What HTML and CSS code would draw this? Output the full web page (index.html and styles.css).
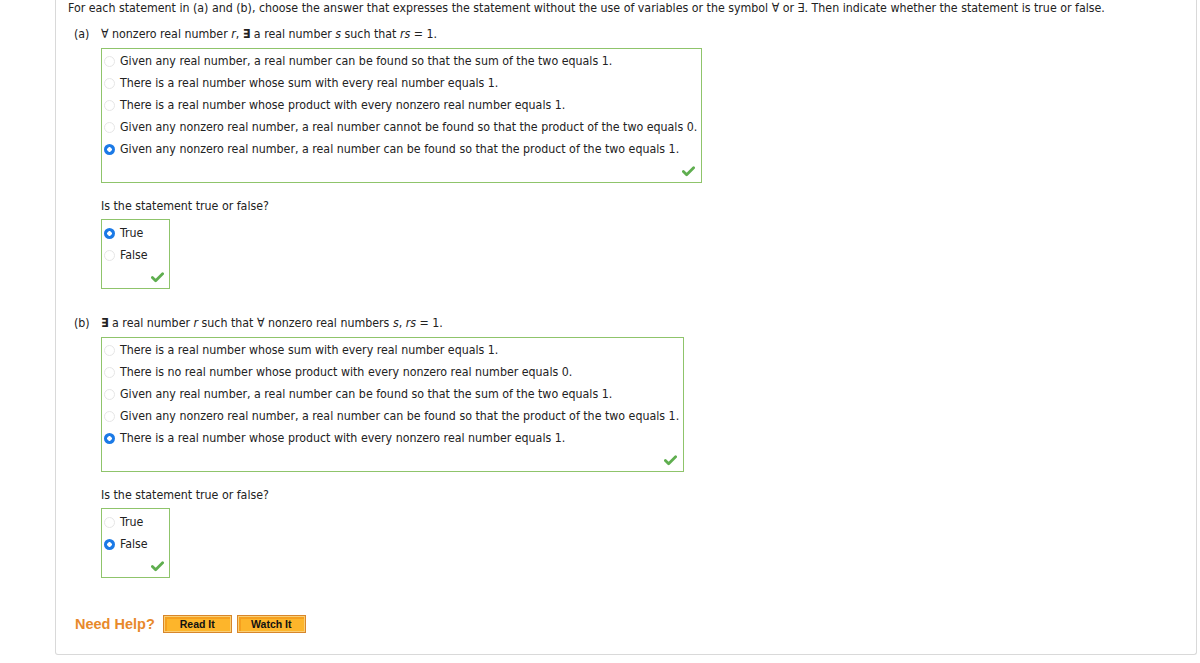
FILE: index.html
```html
<!DOCTYPE html>
<html>
<head>
<meta charset="utf-8">
<link rel="stylesheet" href="styles.css">
</head>
<body>
<div class="page">
  <div class="instr">For each statement in (a) and (b), choose the answer that expresses the statement without the use of variables or the symbol &#8704; or &#8707;. Then indicate whether the statement is true or false.</div>

  <div class="part part-a">
    <div class="phead"><span class="plabel">(a)</span><span>&#8704; nonzero real number <i>r</i>, <b>&#8707;</b> a real number <i>s</i> such that <i>rs</i> = 1.</span></div>
    <div class="box box-a">
      <div class="opt"><span class="radio"></span><span>Given any real number, a real number can be found so that the sum of the two equals 1.</span></div>
      <div class="opt"><span class="radio"></span><span>There is a real number whose sum with every real number equals 1.</span></div>
      <div class="opt"><span class="radio"></span><span>There is a real number whose product with every nonzero real number equals 1.</span></div>
      <div class="opt"><span class="radio"></span><span>Given any nonzero real number, a real number cannot be found so that the product of the two equals 0.</span></div>
      <div class="opt"><span class="radio on"></span><span>Given any nonzero real number, a real number can be found so that the product of the two equals 1.</span></div>
      <div class="checkrow"><svg class="check" viewBox="0 0 14 11" width="13" height="11"><path d="M1.5 5.5 L5 9 L12.5 1.5" fill="none" stroke="#5fae4f" stroke-width="3" stroke-linejoin="round" stroke-linecap="round"/></svg></div>
    </div>
    <div class="question">Is the statement true or false?</div>
    <div class="box tf">
      <div class="opt"><span class="radio on"></span><span>True</span></div>
      <div class="opt"><span class="radio"></span><span>False</span></div>
      <div class="checkrow"><svg class="check" viewBox="0 0 14 11" width="13" height="11"><path d="M1.5 5.5 L5 9 L12.5 1.5" fill="none" stroke="#5fae4f" stroke-width="3" stroke-linejoin="round" stroke-linecap="round"/></svg></div>
    </div>
  </div>

  <div class="part part-b">
    <div class="phead"><span class="plabel">(b)</span><span><b>&#8707;</b> a real number <i>r</i> such that &#8704; nonzero real numbers <i>s</i>, <i>rs</i> = 1.</span></div>
    <div class="box box-b">
      <div class="opt"><span class="radio"></span><span>There is a real number whose sum with every real number equals 1.</span></div>
      <div class="opt"><span class="radio"></span><span>There is no real number whose product with every nonzero real number equals 0.</span></div>
      <div class="opt"><span class="radio"></span><span>Given any real number, a real number can be found so that the sum of the two equals 1.</span></div>
      <div class="opt"><span class="radio"></span><span>Given any nonzero real number, a real number can be found so that the product of the two equals 1.</span></div>
      <div class="opt"><span class="radio on"></span><span>There is a real number whose product with every nonzero real number equals 1.</span></div>
      <div class="checkrow"><svg class="check" viewBox="0 0 14 11" width="13" height="11"><path d="M1.5 5.5 L5 9 L12.5 1.5" fill="none" stroke="#5fae4f" stroke-width="3" stroke-linejoin="round" stroke-linecap="round"/></svg></div>
    </div>
    <div class="question">Is the statement true or false?</div>
    <div class="box tf">
      <div class="opt"><span class="radio"></span><span>True</span></div>
      <div class="opt"><span class="radio on"></span><span>False</span></div>
      <div class="checkrow"><svg class="check" viewBox="0 0 14 11" width="13" height="11"><path d="M1.5 5.5 L5 9 L12.5 1.5" fill="none" stroke="#5fae4f" stroke-width="3" stroke-linejoin="round" stroke-linecap="round"/></svg></div>
    </div>
  </div>

  <div class="help">
    <span class="help-label">Need Help?</span>
    <span class="btn">Read It</span>
    <span class="btn">Watch It</span>
  </div>
</div>
</body>
</html>
```

FILE: styles.css
```css
html, body {
  margin: 0;
  padding: 0;
  background: #fff;
}
body {
  font-family: "DejaVu Sans Condensed", "DejaVu Sans", Verdana, sans-serif;
  font-size: 12.3px;
  color: #222;
}
.page {
  margin-left: 55px;
  width: 1142px;
  height: 655px;
  border: 1px solid #d9d9d9;
  border-top: none;
  box-sizing: border-box;
  padding-left: 12px;
  border-radius: 0 0 3px 3px;
}
.instr {
  line-height: 17px;
  white-space: nowrap;
}
.part-a { margin-top: 9px; }
.phead {
  display: flex;
  line-height: 17px;
  padding-left: 6px;
}
.plabel {
  width: 27px;
}
.phead b { font-weight: bold; }
.box {
  margin-left: 33px;
  border: 1px solid #8fc46b;
  padding-top: 1px;
  box-sizing: border-box;
}
.part .box-a, .part .box-b {
  margin-top: 5px;
  height: 135px;
}
.box-a { width: 601px; }
.box-b { width: 583px; }
.opt {
  display: flex;
  align-items: center;
  height: 22px;
  white-space: nowrap;
  padding-left: 2px;
}
.radio {
  width: 11px;
  height: 11px;
  border-radius: 50%;
  border: 1px solid #e6e6e6;
  box-sizing: border-box;
  background: #fff;
  margin-right: 5px;
  flex: none;
}
.radio.on {
  border: none;
  background: radial-gradient(circle, #fff 0 2px, #1b7ae6 2.5px);
}
.checkrow {
  display: flex;
  justify-content: flex-end;
  align-items: center;
  height: 23px;
  padding-right: 6px;
}
.question {
  margin-left: 33px;
  margin-top: 15px;
  line-height: 17px;
}
.tf {
  margin-top: 4px;
  width: 69px;
  height: 70px;
  padding-top: 2px;
}
.tf .checkrow { padding-right: 5px; height: 22px; }
.part-b { margin-top: 26px; }
.help {
  margin-top: 37px;
  display: flex;
  align-items: center;
  padding-left: 7px;
}
.help-label {
  font-family: "Liberation Sans", Arial, sans-serif;
  font-weight: bold;
  font-size: 14.5px;
  color: #e8892b;
  margin-right: 8px;
}
.btn {
  font-family: "Liberation Sans", Arial, sans-serif;
  font-weight: bold;
  font-size: 10.5px;
  color: #111;
  width: 69px;
  height: 18px;
  box-sizing: border-box;
  display: flex;
  align-items: center;
  justify-content: center;
  background: #fdb52b;
  border: 1px solid #d8862a;
  box-shadow: inset 0 0 0 1px #f9cf76, inset 1px 1px 0 2px #f6a01e;
  margin-right: 5px;
}
```
